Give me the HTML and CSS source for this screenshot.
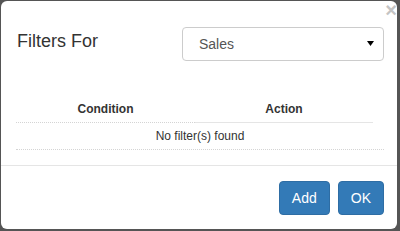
FILE: index.html
```html
<!DOCTYPE html>
<html lang="en">
<head>
  <meta charset="UTF-8">
  <meta name="viewport" content="width=device-width, initial-scale=1.0">
  <title>Filters</title>
  <link rel="stylesheet" href="styles.css">
</head>
<body>
  <div class="modal">
    <button class="close" type="button">&times;</button>

    <div class="modal-body">
      <div class="filter-row">
        <h4 class="filter-title">Filters For</h4>
        <div class="select">
          <span>Sales</span>
          <svg class="caret" width="7" height="5" viewBox="0 0 7 5"><polygon points="0,0 7,0 3.5,5" fill="#000"/></svg>
        </div>
      </div>

      <div class="filter-table">
        <div class="th th-condition">Condition</div>
        <div class="th th-action">Action</div>
        <div class="th th-spacer"></div>
        <div class="empty">No filter(s) found</div>
      </div>
    </div>

    <div class="modal-footer">
      <button class="btn" type="button">Add</button>
      <button class="btn" type="button">OK</button>
    </div>
  </div>
</body>
</html>
```

FILE: styles.css
```css
body {
  margin: 0;
  padding: 1px 3px 2px 1px;
  background-color: #555;
  font-family: "Liberation Sans", Arial, Helvetica, sans-serif;
  color: #333;
}

.modal {
  position: relative;
  height: 228px;
  background-color: #fff;
  border-radius: 6px;
  box-sizing: border-box;
  display: flex;
  flex-direction: column;
}

.close {
  position: absolute;
  top: -1px;
  right: 0;
  padding: 0;
  border: none;
  background: none;
  font-family: "Liberation Sans", Arial, sans-serif;
  font-size: 20px;
  font-weight: bold;
  line-height: 1;
  color: #c4c4c4;
}

.modal-body {
  padding: 26px 13px 15px 15px;
}

.filter-row {
  display: flex;
  justify-content: space-between;
  align-items: flex-start;
}

.filter-title {
  margin: 4px 0 0 1px;
  font-size: 18px;
  font-weight: normal;
  line-height: 20px;
}

.select {
  width: 202px;
  height: 34px;
  box-sizing: border-box;
  border: 1px solid #ccc;
  border-radius: 4px;
  padding: 0 9px 1px 16px;
  display: flex;
  align-items: center;
  justify-content: space-between;
  font-size: 14px;
  color: #555;
}

.caret {
  display: block;
}

.filter-table {
  margin-top: 34px;
  display: grid;
  grid-template-columns: 179px 178px 11px;
  font-size: 12px;
  line-height: 17px;
}

.th {
  padding: 6px 8px 4px;
  font-weight: bold;
  text-align: center;
}

.th-condition {
  border-bottom: 1px dotted #d4d4d4;
}

.th-action {
  border-bottom: 1px solid #e5e5e5;
}

.empty {
  grid-column: 1 / 4;
  padding: 5px 8px 4px;
  text-align: center;
  border-bottom: 1px dotted #d4d4d4;
}

.modal-footer {
  margin-top: auto;
  border-top: 1px solid #e5e5e5;
  padding: 15px 13px 14px 15px;
  display: flex;
  justify-content: flex-end;
  gap: 8px;
}

.btn {
  background-color: #337ab7;
  border: 1px solid #2e6da4;
  color: #fff;
  border-radius: 4px;
  padding: 6px 12px;
  font-family: "Liberation Sans", Arial, sans-serif;
  font-size: 14px;
  line-height: 20px;
}
```
